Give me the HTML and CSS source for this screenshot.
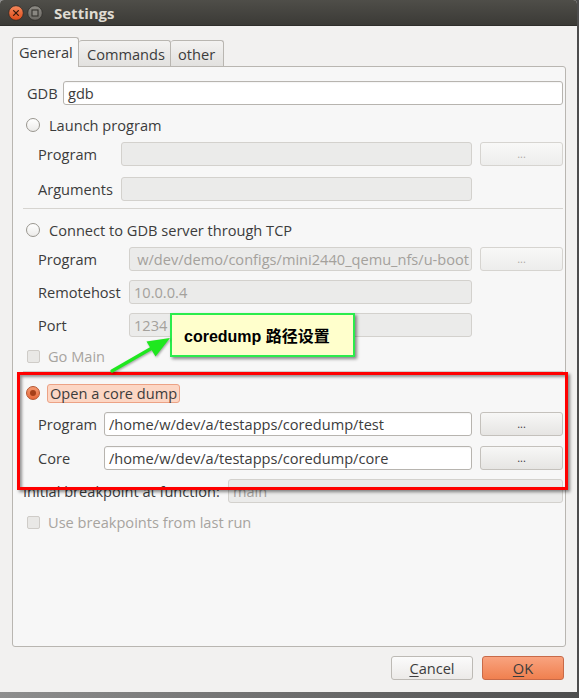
FILE: index.html
```html
<!DOCTYPE html>
<html>
<head>
<meta charset="utf-8">
<title>Settings</title>
<link rel="stylesheet" href="styles.css">
</head>
<body>
<div class="window">
  <div class="titlebar">
    <svg class="tb-btn" width="16" height="16" viewBox="0 0 16 16">
      <defs>
        <linearGradient id="gc" x1="0" y1="0" x2="0" y2="1">
          <stop offset="0" stop-color="#f58a5e"/>
          <stop offset="1" stop-color="#df4a17"/>
        </linearGradient>
        <linearGradient id="gm" x1="0" y1="0" x2="0" y2="1">
          <stop offset="0" stop-color="#8d8b85"/>
          <stop offset="1" stop-color="#6a6863"/>
        </linearGradient>
      </defs>
      <circle cx="8" cy="8" r="7.3" fill="url(#gc)" stroke="#2e2a26" stroke-width="0.8"/>
      <path d="M5.6 5.6l4.8 4.8M10.4 5.6l-4.8 4.8" stroke="#3a1a0c" stroke-width="1.3" stroke-linecap="round"/>
    </svg>
    <svg class="tb-btn" width="16" height="16" viewBox="0 0 16 16">
      <circle cx="8" cy="8" r="7.3" fill="url(#gm)" stroke="#2e2d29" stroke-width="0.8"/>
      <rect x="5" y="5" width="6" height="6" fill="#8a8882" stroke="#33322e" stroke-width="1.1"/>
    </svg>
    <span class="tb-title">Settings</span>
  </div>

  <div class="content">
    <div class="tabs">
      <div class="tab active">General</div>
      <div class="tab">Commands</div>
      <div class="tab">other</div>
    </div>

    <div class="panel">
      <div class="gdb-row">
        <span class="lbl-gdb">GDB</span>
        <div class="field">gdb</div>
      </div>

      <div class="opt mt10"><span class="radio"></span><span>Launch program</span></div>
      <div class="form f-launch mt7">
        <span class="lbl">Program</span><div class="field disabled"></div><div class="btn disabled">...</div>
        <span class="lbl">Arguments</span><div class="field disabled"></div>
      </div>

      <div class="sep mt7"></div>

      <div class="opt mt11"><span class="radio"></span><span>Connect to GDB server through TCP</span></div>
      <div class="form f-tcp mt7">
        <span class="lbl">Program</span><div class="field disabled endtext">w/dev/demo/configs/mini2440_qemu_nfs/u-boot</div><div class="btn disabled">...</div>
        <span class="lbl">Remotehost</span><div class="field disabled">10.0.0.4</div>
        <span class="lbl">Port</span><div class="field disabled">1234</div>
      </div>

      <div class="opt chk-row mt9 dim"><span class="check"></span><span>Go Main</span></div>

      <div class="sep mt5"></div>

      <div class="opt mt11"><span class="radio on"></span><span class="focus">Open a core dump</span></div>
      <div class="form f-core mt9">
        <span class="lbl">Program</span><div class="field">/home/w/dev/a/testapps/coredump/test</div><div class="btn">...</div>
        <span class="lbl">Core</span><div class="field">/home/w/dev/a/testapps/coredump/core</div><div class="btn">...</div>
      </div>

      <div class="bp-row mt9">
        <span>Initial breakpoint at function:</span>
        <div class="field disabled">main</div>
      </div>

      <div class="opt chk-row mt9 dim"><span class="check"></span><span>Use breakpoints from last run</span></div>
    </div>

    <div class="buttons">
      <div class="dbtn"><span class="u">C</span>ancel</div>
      <div class="dbtn ok"><span class="u">O</span>K</div>
    </div>
  </div>

  <div class="callout">coredump 路径设置</div>
  <svg class="arrow" width="80" height="50" viewBox="0 0 80 50">
    <line x1="7" y1="41" x2="47" y2="18" stroke="#1fe81f" stroke-width="3.2" stroke-linecap="round"/>
    <polygon points="65,8 41.5,11.5 50.5,26.5" fill="#1fe81f"/>
  </svg>
  <div class="redbox"></div>
</div>
</body>
</html>
```

FILE: styles.css
```css
* { box-sizing: border-box; }

html, body {
  margin: 0;
  padding: 0;
}

body {
  width: 579px;
  height: 698px;
  overflow: hidden;
  background: linear-gradient(to right, #8e8e8e, #4d4d4d);
  font-family: "Open Sans", "DejaVu Sans", sans-serif;
  font-size: 14.6px;
  color: #3c3c3c;
}

.window {
  position: relative;
  width: 577px;
  height: 692px;
  background: #f2f1f0;
  display: flex;
  flex-direction: column;
  border-radius: 4px 4px 0 0;
}

/* title bar */
.titlebar {
  height: 26px;
  flex: none;
  display: flex;
  align-items: center;
  padding-left: 8px;
  gap: 3px;
  background: linear-gradient(#4f4e49, #3b3a36);
  border-bottom: 1px solid #2f2e2b;
  border-radius: 4px 4px 0 0;
}

.tb-btn {
  display: block;
  flex: none;
}

.tb-title {
  margin-left: 8px;
  font-weight: bold;
  font-size: 15px;
  color: #dfdbd2;
  line-height: 20px;
}

/* content */
.content {
  flex: 1;
  display: flex;
  flex-direction: column;
  padding: 11px 11px 12px 12px;
}

.tabs {
  display: flex;
  align-items: flex-end;
  height: 29px;
  flex: none;
}

.tab {
  height: 26px;
  padding: 0 7px;
  display: flex;
  align-items: center;
  border: 1px solid #b9b6b1;
  border-bottom: none;
  border-left: none;
  border-radius: 3px 3px 0 0;
  background: linear-gradient(#f3f2f1, #e2e1df);
  line-height: 18px;
}

.tab:nth-child(2) { width: 92px; padding-left: 8px; }
.tab:nth-child(3) { width: 53px; }

.tab.active {
  width: 67px;
  height: 30px;
  margin-bottom: -1px;
  border-left: 1px solid #b9b6b1;
  background: #f7f7f7;
  position: relative;
  z-index: 1;
  padding-left: 6px;
  padding-bottom: 2px;
}

.panel {
  flex: 1;
  background: #f7f7f7;
  border: 1px solid #b9b6b1;
  border-radius: 0 3px 3px 3px;
  padding: 0 2px 0 10px;
  display: flex;
  flex-direction: column;
}

.mt5 { margin-top: 5px; }
.mt7 { margin-top: 7px; }
.mt9 { margin-top: 9px; }
.mt10 { margin-top: 10px; }
.mt11 { margin-top: 11px; }

.gdb-row {
  margin-top: 14px;
  display: grid;
  grid-template-columns: 40px 1fr;
  align-items: center;
}

.lbl-gdb { padding-left: 4px; }

.field {
  height: 24px;
  background: #ffffff;
  border: 1px solid #b7b4af;
  border-radius: 3px;
  padding: 0 4px;
  display: flex;
  align-items: center;
  white-space: nowrap;
  overflow: hidden;
  color: #3c3c3c;
  box-shadow: inset 0 1px 1px rgba(0,0,0,0.04);
}

.field.disabled {
  background: #ebebea;
  border-color: #d3d1cd;
  color: #a4a19c;
  box-shadow: none;
}

.field.endtext {
  justify-content: flex-end;
  padding-right: 2px;
  padding-left: 1px;
}

.opt {
  height: 20px;
  display: flex;
  align-items: center;
  gap: 9px;
  white-space: nowrap;
}

.radio {
  flex: none;
  width: 14px;
  height: 14px;
  margin-left: 3px;
  border-radius: 50%;
  border: 1px solid #99968f;
  background: linear-gradient(#ffffff, #ecebe9);
  position: relative;
}

.radio.on {
  border-color: #b4532f;
  background: linear-gradient(#f49a72, #e7693b);
}

.radio.on::after {
  content: "";
  position: absolute;
  left: 3px;
  top: 3px;
  width: 6px;
  height: 6px;
  border-radius: 50%;
  background: #a5401a;
}

.focus {
  margin-left: -2px;
  padding: 0 2px;
  height: 19px;
  display: flex;
  align-items: center;
  background: #fcd6c4;
  border: 1px solid #eca285;
  border-radius: 3px;
}

.chk-row { gap: 8px; }

.check {
  flex: none;
  width: 13px;
  height: 13px;
  margin-left: 4px;
  border: 1px solid #cfccc8;
  border-radius: 2px;
  background: #e9e8e6;
}

.dim { color: #a7a49f; }

.sep {
  height: 1px;
  background: #d6d4d0;
  flex: none;
}

.form {
  display: grid;
  padding-left: 15px;
  column-gap: 8px;
  align-items: center;
}

.form .lbl { grid-column: 1; white-space: nowrap; }

.f-launch { grid-template-columns: 75px 1fr 83px; row-gap: 11px; }
.f-tcp { grid-template-columns: 83px 1fr 83px; row-gap: 9px; }
.f-core { grid-template-columns: 58px 1fr 83px; row-gap: 10px; }

.btn {
  height: 24px;
  border: 1px solid #c4c1bc;
  border-radius: 3px;
  background: linear-gradient(#f7f7f6, #e6e5e3);
  display: flex;
  align-items: center;
  justify-content: center;
  font-size: 11px;
  color: #3c3c3c;
  padding-bottom: 2px;
}

.btn.disabled {
  color: #aeaba6;
  border-color: #d6d4d0;
  background: linear-gradient(#f8f8f7, #ededec);
}

.bp-row {
  display: grid;
  grid-template-columns: 205px 1fr;
  align-items: center;
  white-space: nowrap;
}

/* dialog buttons */
.buttons {
  flex: none;
  margin-top: 9px;
  margin-right: 2px;
  display: flex;
  justify-content: flex-end;
  gap: 9px;
}

.dbtn {
  width: 82px;
  height: 24px;
  border: 1px solid #bdbab5;
  border-radius: 3px;
  background: linear-gradient(#fbfbfb, #eceae8);
  display: flex;
  align-items: center;
  justify-content: center;
  color: #3c3c3c;
}

.dbtn.ok {
  border-color: #c86a48;
  background: linear-gradient(#f9a37f, #f0804f);
}

.u { text-decoration: underline; text-underline-offset: 2px; }

/* annotations */
.callout {
  position: absolute;
  left: 170px;
  top: 313px;
  width: 185px;
  height: 44px;
  background: #ffffcc;
  border: 2px solid #2bec4c;
  box-shadow: 2px 2px 3px rgba(0,0,0,0.45);
  padding-left: 12px;
  display: flex;
  align-items: center;
  font-family: "Liberation Sans", "Noto Sans CJK SC", sans-serif;
  font-weight: bold;
  font-size: 16px;
  color: #000;
  z-index: 3;
}

.arrow {
  position: absolute;
  left: 105px;
  top: 330px;
  filter: drop-shadow(1px 1px 1px rgba(0,0,0,0.35));
  z-index: 3;
}

.redbox {
  position: absolute;
  left: 17px;
  top: 372px;
  width: 551px;
  height: 118px;
  border: 3px solid #ff0000;
  box-shadow: 2px 2px 3px rgba(0,0,0,0.45), inset 2px 2px 3px rgba(0,0,0,0.4);
  z-index: 2;
}
```
